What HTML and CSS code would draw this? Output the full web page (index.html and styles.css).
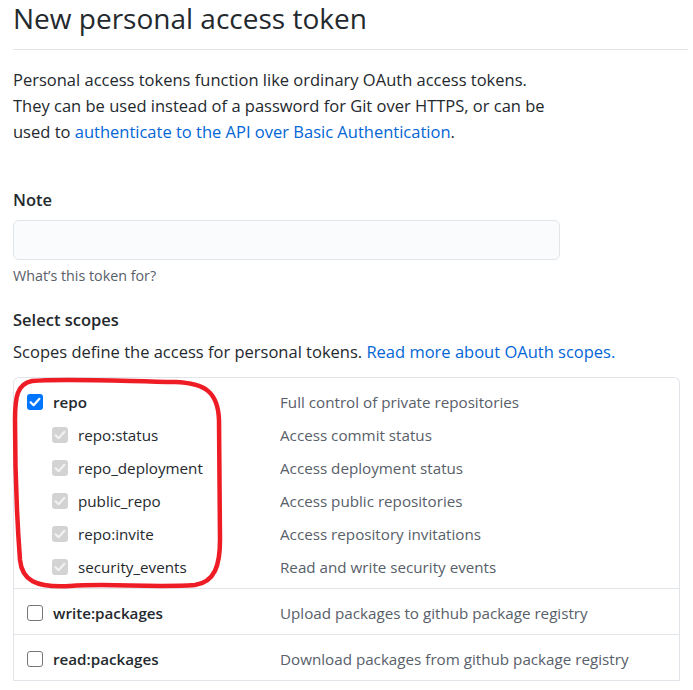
FILE: index.html
```html
<!DOCTYPE html>
<html>
<head>
<meta charset="utf-8">
<link rel="stylesheet" href="styles.css">
</head>
<body>
<div class="page">
  <div class="header"><h1 class="title">New personal access token</h1></div>
  <p class="intro">Personal access tokens function like ordinary OAuth access tokens.<br>They can be used instead of a password for Git over HTTPS, or can be<br>used to <a class="link" href="#">authenticate to the API over Basic Authentication</a>.</p>
  <div class="label">Note</div>
  <div class="input"></div>
  <div class="hint">What’s this token for?</div>
  <div class="label scopes-label">Select scopes</div>
  <p class="scopes-text">Scopes define the access for personal tokens. <a class="link" href="#">Read more about OAuth scopes.</a></p>
  <div class="scope-box">
    <div class="group group-repo">
      <div class="row">
        <span class="cb cb-on"><svg viewBox="0 0 16 16" width="16" height="16"><path d="M3.6 8.3 L6.6 11.2 L12.4 4.8" fill="none" stroke="#fff" stroke-width="2.2" stroke-linecap="round" stroke-linejoin="round"/></svg></span>
        <span class="name bold">repo</span>
        <span class="desc">Full control of private repositories</span>
      </div>
      <div class="row sub">
        <span class="cb cb-dis"><svg viewBox="0 0 16 16" width="16" height="16"><path d="M3.6 8.3 L6.6 11.2 L12.4 4.8" fill="none" stroke="#f2f2f2" stroke-width="2.2" stroke-linecap="round" stroke-linejoin="round"/></svg></span>
        <span class="name">repo:status</span>
        <span class="desc">Access commit status</span>
      </div>
      <div class="row sub">
        <span class="cb cb-dis"><svg viewBox="0 0 16 16" width="16" height="16"><path d="M3.6 8.3 L6.6 11.2 L12.4 4.8" fill="none" stroke="#f2f2f2" stroke-width="2.2" stroke-linecap="round" stroke-linejoin="round"/></svg></span>
        <span class="name">repo_deployment</span>
        <span class="desc">Access deployment status</span>
      </div>
      <div class="row sub">
        <span class="cb cb-dis"><svg viewBox="0 0 16 16" width="16" height="16"><path d="M3.6 8.3 L6.6 11.2 L12.4 4.8" fill="none" stroke="#f2f2f2" stroke-width="2.2" stroke-linecap="round" stroke-linejoin="round"/></svg></span>
        <span class="name">public_repo</span>
        <span class="desc">Access public repositories</span>
      </div>
      <div class="row sub">
        <span class="cb cb-dis"><svg viewBox="0 0 16 16" width="16" height="16"><path d="M3.6 8.3 L6.6 11.2 L12.4 4.8" fill="none" stroke="#f2f2f2" stroke-width="2.2" stroke-linecap="round" stroke-linejoin="round"/></svg></span>
        <span class="name">repo:invite</span>
        <span class="desc">Access repository invitations</span>
      </div>
      <div class="row sub">
        <span class="cb cb-dis"><svg viewBox="0 0 16 16" width="16" height="16"><path d="M3.6 8.3 L6.6 11.2 L12.4 4.8" fill="none" stroke="#f2f2f2" stroke-width="2.2" stroke-linecap="round" stroke-linejoin="round"/></svg></span>
        <span class="name">security_events</span>
        <span class="desc">Read and write security events</span>
      </div>
      <svg class="annot" viewBox="0 0 240 220" width="240" height="220">
        <path d="M32 4 C60 1 120 4 175 5 C205 6 218 15 219 43 L220 163 C220 188 215 205 195 208 C150 211 110 206 70 209 C35 211 22 203 20 183 C17 143 15 93 15 43 C15 20 17 7 32 4 Z" fill="none" stroke="#ee1c25" stroke-width="4.5" stroke-linejoin="round"/>
      </svg>
    </div>
    <div class="group group-single">
      <div class="row">
        <span class="cb cb-off"></span>
        <span class="name bold">write:packages</span>
        <span class="desc">Upload packages to github package registry</span>
      </div>
    </div>
    <div class="group group-single">
      <div class="row">
        <span class="cb cb-off"></span>
        <span class="name bold">read:packages</span>
        <span class="desc">Download packages from github package registry</span>
      </div>
    </div>
  </div>
</div>
</body>
</html>
```

FILE: styles.css
```css
html, body {
  margin: 0;
  padding: 0;
  background: #ffffff;
}
body {
  font-family: "Open Sans", "Noto Sans", sans-serif;
  color: #24292e;
  font-size: 16.5px;
}
.page {
  padding: 0 5px 0 13px;
}
.header {
  height: 49px;
  border-bottom: 1px solid #e1e4e8;
}
.title {
  margin: 0;
  font-size: 28px;
  font-weight: 400;
  line-height: 34px;
  padding-top: 1px;
  height: 34px;
}
.intro {
  margin: 17px 0 0 0;
  line-height: 26px;
}
.link {
  color: #0366d6;
  text-decoration: none;
}
.label {
  margin-top: 42px;
  font-weight: 600;
  line-height: 26px;
}
.input {
  margin-top: 7px;
  width: 545px;
  height: 38px;
  border: 1px solid #e1e4e8;
  border-radius: 6px;
  background: #fafbfc;
}
.hint {
  margin-top: 5px;
  font-size: 14.3px;
  line-height: 22px;
  color: #586069;
}
.scopes-label {
  margin-top: 20px;
}
.scopes-text {
  margin: 6px 0 0 0;
  line-height: 26px;
}
.scope-box {
  margin-top: 12px;
  width: 665px;
  border: 1px solid #e1e4e8;
  border-bottom: 0;
  border-radius: 6px 6px 0 0;
  font-size: 15.2px;
}
.group {
  position: relative;
  border-bottom: 1px solid #e1e4e8;
}
.group-repo {
  padding: 7px 0 5px 0;
}
.group-single {
  height: 46px;
  display: flex;
  align-items: center;
  padding-top: 2px;
  box-sizing: border-box;
}
.row {
  display: flex;
  align-items: center;
  height: 33px;
  padding-left: 13px;
}
.group-single .row {
  flex: 1;
}
.row.sub {
  padding-left: 38px;
}
.cb {
  width: 16px;
  height: 16px;
  flex: none;
  border-radius: 3px;
  box-sizing: border-box;
  display: block;
}
.cb svg {
  display: block;
}
.cb-on {
  background: #0075ff;
}
.cb-dis {
  background: #d3d3d3;
}
.cb-off {
  border: 1px solid #767676;
  background: #fff;
}
.name {
  margin-left: 10px;
  width: 227px;
  flex: none;
}
.row.sub .name {
  width: 202px;
}
.bold {
  font-weight: 600;
}
.desc {
  color: #586069;
}
.annot {
  position: absolute;
  left: -14px;
  top: -1px;
  overflow: visible;
  pointer-events: none;
}
```
